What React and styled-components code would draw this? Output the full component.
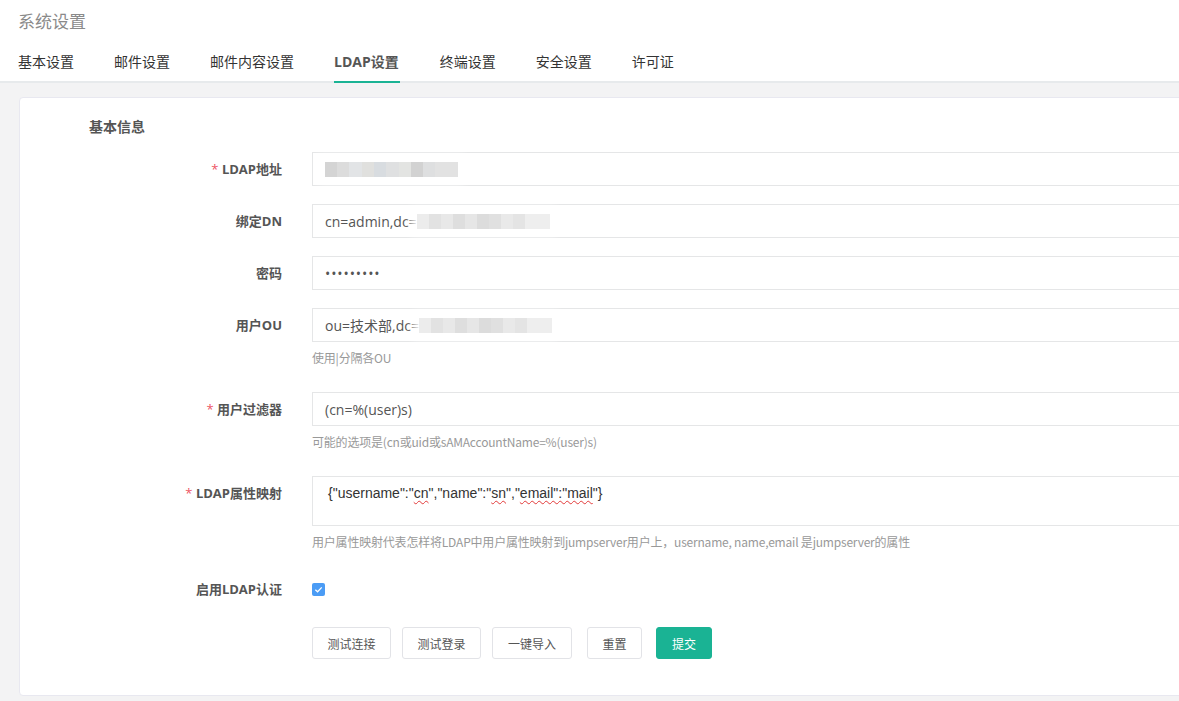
import React from 'react'
import styled, { createGlobalStyle } from 'styled-components'

const tabs = ['基本设置', '邮件设置', '邮件内容设置', 'LDAP设置', '终端设置', '安全设置', '许可证']

const blurA = 'linear-gradient(90deg, #d4d4d4 0 12px, #dcdcdc 12px 24px, #e2e4e6 24px 37px, #e0e0de 37px 49px, #d8dce0 49px 61px, #dfe0e1 61px 74px, #e3e4e2 74px 86px, #d2d2d2 86px 98px, #dedfe0 98px 110px, #e2e2e2 110px 133px)'
const blurB = 'linear-gradient(90deg, #ececec 0 12px, #e2e2e2 12px 24px, #e8e8e8 24px 36px, #dedede 36px 48px, #e6e6e6 48px 60px, #dcdcdc 60px 72px, #e0e0e0 72px 84px, #e9e9e9 84px 96px, #e4e4e4 96px 108px, #eeeeee 108px 133px)'

const App = () => {
  return (
    <>
      <Global />
      <Page>
        <Header>
          <Title>系统设置</Title>
          <Tabs>
            {tabs.map((t) => (
              <Tab key={t} active={t === 'LDAP设置'}>{t}</Tab>
            ))}
          </Tabs>
        </Header>

        <Card>
          <SectionTitle>基本信息</SectionTitle>

          <Row>
            <Label required>LDAP地址</Label>
            <Field>
              <Input>
                <Masked style={{ background: blurA }} />
              </Input>
            </Field>
          </Row>

          <Row>
            <Label>绑定DN</Label>
            <Field>
              <Input>
                cn=admin,dc=<Masked style={{ background: blurB }} />
              </Input>
            </Field>
          </Row>

          <Row>
            <Label>密码</Label>
            <Field>
              <Input>
                <Dots>•••••••••</Dots>
              </Input>
            </Field>
          </Row>

          <Row>
            <Label>用户OU</Label>
            <Field>
              <Input>
                ou=技术部,dc=<Masked style={{ background: blurB }} />
              </Input>
              <Help>使用|分隔各OU</Help>
            </Field>
          </Row>

          <Row>
            <Label required>用户过滤器</Label>
            <Field>
              <Input>(cn=%(user)s)</Input>
              <Help>可能的选项是(cn或uid或sAMAccountName=%(user)s)</Help>
            </Field>
          </Row>

          <Row>
            <Label required>LDAP属性映射</Label>
            <Field>
              <TextArea>
                {'{"username":"'}<Typo>cn</Typo>{'","name":"'}<Typo>sn</Typo>{'","'}<Typo>{'email":"mail'}</Typo>{'"}'}
              </TextArea>
              <Help>用户属性映射代表怎样将LDAP中用户属性映射到jumpserver用户上，username, name,email 是jumpserver的属性</Help>
            </Field>
          </Row>

          <Row compact>
            <Label compact>启用LDAP认证</Label>
            <Field>
              <CheckWrap>
                <Check>
                  <svg width="9" height="9" viewBox="0 0 10 10">
                    <path d="M1.5 5.2 L4 7.5 L8.6 2.6" fill="none" stroke="#fff" strokeWidth="1.4" />
                  </svg>
                </Check>
              </CheckWrap>
            </Field>
          </Row>

          <Row>
            <span />
            <Buttons>
              <Btn width={79}>测试连接</Btn>
              <Btn width={79}>测试登录</Btn>
              <Btn width={80}>一键导入</Btn>
              <Btn width={55} gapLeft={15}>重置</Btn>
              <Btn width={56} primary gapLeft={14}>提交</Btn>
            </Buttons>
          </Row>
        </Card>
      </Page>
    </>
  )
}

export default App

const Global = createGlobalStyle`
  html, body {
    margin: 0;
    padding: 0;
    background: #f3f3f4;
    overflow: hidden;
  }
  body {
    font-family: "Open Sans", "Noto Sans CJK SC", sans-serif;
    color: #676a6c;
  }
`

const Page = styled.div`
  width: 100%;
  height: 701px;
  display: flex;
  flex-direction: column;
`

const Header = styled.div`
  background: #fff;
  padding: 10px 18px 0;
  border-bottom: 2px solid #e7eaec;
`

const Title = styled.div`
  font-family: "Noto Sans CJK SC", sans-serif;
  font-size: 17px;
  line-height: 22px;
  color: #8a8a8a;
`

const Tabs = styled.div`
  display: flex;
  gap: 40px;
  margin-top: 12px;
`

const Tab = styled.div`
  font-family: "Open Sans", "Noto Sans CJK SC", sans-serif;
  font-size: 14px;
  line-height: 36px;
  height: 37px;
  padding-right: ${(p) => (p.active ? 1 : 0)}px;
  color: ${(p) => (p.active ? '#555' : '#333')};
  font-weight: ${(p) => (p.active ? 700 : 400)};
  border-bottom: 2px solid ${(p) => (p.active ? '#1ab394' : 'transparent')};
  margin-bottom: -2px;
`

const Card = styled.div`
  margin: 14px -40px 0 19px;
  height: 599px;
  box-sizing: border-box;
  background: #fff;
  border: 1px solid #e8e8f0;
  border-radius: 4px;
  padding: 18px 0 0;
`

const SectionTitle = styled.div`
  font-family: "Noto Sans CJK SC", sans-serif;
  font-size: 14px;
  font-weight: 700;
  line-height: 20px;
  color: #555;
  margin: 0 0 16px 69px;
`

const Row = styled.div`
  display: grid;
  grid-template-columns: 262px 1fr;
  column-gap: 30px;
  margin-bottom: ${(p) => (p.compact ? 25 : 18)}px;
`

const Label = styled.div`
  font-family: "Open Sans", "Noto Sans CJK SC", sans-serif;
  font-size: 13px;
  font-weight: 700;
  line-height: ${(p) => (p.compact ? 26 : 34)}px;
  color: #555;
  text-align: right;

  &::before {
    content: ${(p) => (p.required ? '"* "' : '""')};
    color: #ed5565;
    font-weight: 400;
  }
`

const Field = styled.div`
  display: flex;
  flex-direction: column;
`

const Input = styled.div`
  height: 34px;
  box-sizing: border-box;
  border: 1px solid #e5e6e7;
  padding: 0 12px;
  display: flex;
  align-items: center;
  font-size: 14px;
  color: #555;
  white-space: nowrap;
`

const Masked = styled.span`
  display: inline-block;
  width: 133px;
  height: 15px;
  box-shadow: 0 0 8px 6px rgba(255, 255, 255, 0.9);
`

const Dots = styled.span`
  font-size: 14px;
  letter-spacing: 0.9px;
  color: #555;
`

const TextArea = styled.div`
  height: 50px;
  box-sizing: border-box;
  border: 1px solid #e5e6e7;
  padding: 6px 15px;
  font-family: "Liberation Sans", "Noto Sans CJK SC", sans-serif;
  font-size: 14px;
  line-height: 20px;
  color: #333;
`

const Typo = styled.span`
  text-decoration: underline wavy #e23a3a;
  text-decoration-thickness: 1px;
  text-underline-offset: 2px;
`

const Help = styled.div`
  font-family: "Noto Sans CJK SC", sans-serif;
  font-size: 12px;
  line-height: 16px;
  color: #999;
  margin: 8px 0 8px;
  letter-spacing: -0.2px;
`

const CheckWrap = styled.div`
  height: 26px;
  display: flex;
  align-items: center;
`

const Check = styled.span`
  width: 13px;
  height: 13px;
  border-radius: 2px;
  background: #4b9cf5;
  display: flex;
  align-items: center;
  justify-content: center;
`

const Buttons = styled.div`
  display: flex;
  gap: 11px;
`

const Btn = styled.button`
  width: ${(p) => p.width}px;
  height: 32px;
  margin-left: ${(p) => (p.gapLeft ? p.gapLeft - 11 : 0)}px;
  border-radius: 3px;
  font-family: "Noto Sans CJK SC", sans-serif;
  font-size: 12px;
  cursor: pointer;
  padding: 0;
  border: 1px solid ${(p) => (p.primary ? '#1ab394' : '#e2e3e7')};
  background: ${(p) => (p.primary ? '#1ab394' : '#fff')};
  color: ${(p) => (p.primary ? '#fff' : '#555')};
`
